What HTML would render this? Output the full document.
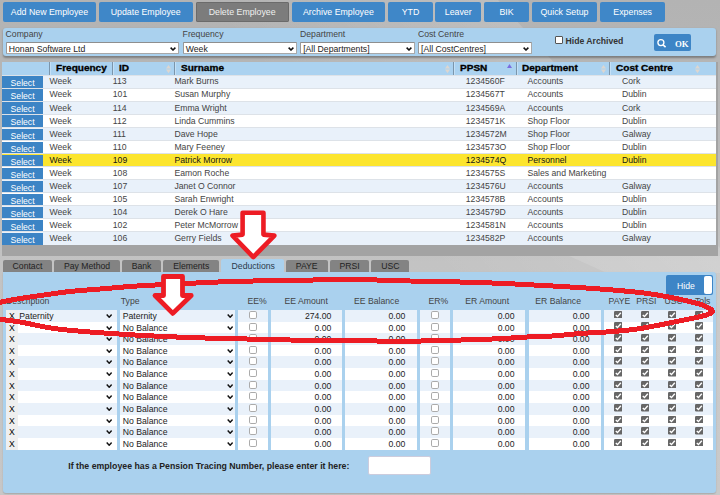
<!DOCTYPE html><html><head><meta charset="utf-8"><style>
*{margin:0;padding:0;box-sizing:border-box}
html,body{width:720px;height:495px;overflow:hidden}
body{position:relative;background:linear-gradient(to bottom,#b3b3b3 0px,#b5b5b5 60px,#bcbcbc 200px,#c3c3c3 262px,#c7c7c7 495px);font-family:"Liberation Sans",sans-serif;font-size:8.67px;color:#333}
.a{position:absolute}
.btn{position:absolute;top:2.2px;height:19.8px;background:#3f87c8;color:#fff;border-radius:2px;text-align:center;line-height:20px;font-size:8.8px;white-space:nowrap}
.panel{position:absolute;background:#aad1ee;border-radius:3px}
.lbl{position:absolute;font-size:8.67px;color:#444;white-space:nowrap}
.sel{position:absolute;height:12px;background:#fff;border:1px solid #a8a8a8;border-top-color:#8e8e8e;border-left-color:#999;border-radius:1px;font-size:8.67px;color:#222;line-height:12.2px;padding-left:2.2px;white-space:nowrap}
.chev{position:absolute;right:1.6px;top:3.6px;width:6px;height:3.6px}
.tbl{position:absolute;left:2.4px;top:62px;width:715.6px;height:194.2px;background:#a3a3a3}
.hdr{position:absolute;left:0;top:0;width:713.4px;height:12.7px;background:#abd2f0}
.hl{position:absolute;top:0;height:12.7px;font-weight:bold;color:#000;-webkit-text-stroke:0.3px #000;font-size:8.67px;line-height:12.9px;white-space:nowrap;transform-origin:0 50%;transform:scaleX(1.16)}
.hsep{position:absolute;top:0;width:1px;height:12.7px;background:#7b95ab;box-shadow:1px 0 0 #c4e0f6}
.row{position:absolute;left:0;width:713.4px;height:13.08px}
.row::before{content:'';position:absolute;left:0;top:-0.5px;width:100%;height:1px;background:#dde2e8}
.row span{position:absolute;top:0.4px;line-height:13px;white-space:nowrap;color:#444}
.yl span{color:#151515}
.sb{position:absolute;left:0;top:1.2px;width:40.4px;height:11.4px;background:#3c84c5;color:#fff;text-align:center;line-height:14.3px}
.tab{position:absolute;top:259.8px;height:12.2px;background:#838383;color:#222;text-align:center;line-height:12.5px;border-radius:2px 2px 0 0;font-size:8.67px}
</style></head><body>
<svg class="a" style="left:0;top:0" width="720" height="495" viewBox="0 0 720 495"><defs><linearGradient id="lb" gradientUnits="userSpaceOnUse" x1="520" y1="-20" x2="330" y2="150"><stop offset="0" stop-color="#fff" stop-opacity="0.16"/><stop offset="1" stop-color="#fff" stop-opacity="0"/></linearGradient></defs><polygon points="0,0 498,0 941,495 0,495" fill="url(#lb)"/><polygon points="569,256 720,256 720,273 607,273" fill="#fff" fill-opacity="0.12"/></svg>
<div class="btn" style="left:3px;width:93.0px">Add New Employee</div>
<div class="btn" style="left:98.7px;width:93.9px">Update Employee</div>
<div class="btn" style="left:195.5px;width:93.3px;background:#7c7c7c;box-shadow:inset 0 0 0 0.8px #666;color:#f0f0f0">Delete Employee</div>
<div class="btn" style="left:291.7px;width:93.3px">Archive Employee</div>
<div class="btn" style="left:388px;width:45.0px">YTD</div>
<div class="btn" style="left:435.4px;width:45.6px">Leaver</div>
<div class="btn" style="left:484px;width:45.0px">BIK</div>
<div class="btn" style="left:531.7px;width:65.6px">Quick Setup</div>
<div class="btn" style="left:600px;width:65.3px">Expenses</div>
<div class="panel" style="left:3px;top:28px;width:713px;height:27.6px;box-shadow:0 1.2px 2px rgba(0,0,0,.3)"></div>
<div class="lbl" style="left:5.6px;top:29.4px">Company</div>
<div class="sel" style="left:5.6px;top:42.4px;width:173.1px">Honan Software Ltd<svg class="chev" viewBox="0 0 6 3.6"><path d="M0.6 0.6 L3 3 L5.4 0.6" fill="none" stroke="#111" stroke-width="1.5"/></svg></div>
<div class="lbl" style="left:182.6px;top:29.4px">Frequency</div>
<div class="sel" style="left:182.6px;top:42.4px;width:114.4px">Week<svg class="chev" viewBox="0 0 6 3.6"><path d="M0.6 0.6 L3 3 L5.4 0.6" fill="none" stroke="#111" stroke-width="1.5"/></svg></div>
<div class="lbl" style="left:300px;top:29.4px">Department</div>
<div class="sel" style="left:300px;top:42.4px;width:114.8px">[All Departments]<svg class="chev" viewBox="0 0 6 3.6"><path d="M0.6 0.6 L3 3 L5.4 0.6" fill="none" stroke="#111" stroke-width="1.5"/></svg></div>
<div class="lbl" style="left:417.9px;top:29.4px">Cost Centre</div>
<div class="sel" style="left:417.9px;top:42.4px;width:114.1px">[All CostCentres]<svg class="chev" viewBox="0 0 6 3.6"><path d="M0.6 0.6 L3 3 L5.4 0.6" fill="none" stroke="#111" stroke-width="1.5"/></svg></div>
<div class="a" style="left:555px;top:36px;width:8px;height:8px;background:#fff;border:1px solid #555;border-radius:1px"></div>
<div class="lbl" style="left:565.5px;top:36px;font-weight:bold;color:#333">Hide Archived</div>
<div class="a" style="left:653.7px;top:34px;width:37.3px;height:17px;background:#3d85c6;border-radius:2px"></div>
<svg class="a" style="left:656px;top:38px" width="12" height="12" viewBox="0 0 12 12"><circle cx="4.9" cy="4.6" r="3" fill="none" stroke="#fff" stroke-width="1.35"/><path d="M7 6.8 L9.6 9.2" stroke="#fff" stroke-width="1.6"/></svg>
<div class="a" style="left:675px;top:39.2px;color:#fff;font-family:'Liberation Serif',serif;font-size:8.8px;font-weight:bold">OK</div>
<div class="tbl">
<div class="hdr">
<div class="hsep" style="left:46.6px"></div>
<div class="hsep" style="left:110px"></div>
<div class="hsep" style="left:172px"></div>
<div class="hsep" style="left:450.6px"></div>
<div class="hsep" style="left:513.2px"></div>
<div class="hsep" style="left:606.6px"></div>
<svg class="a" style="left:163.7px;top:2.9px" width="5" height="8.2" viewBox="0 0 5 8.2"><path d="M2.5 0 L5 3.6 L0 3.6Z M2.5 8.2 L5 4.6 L0 4.6Z" fill="#dcd6d0"/></svg>
<svg class="a" style="left:442.3px;top:2.9px" width="5" height="8.2" viewBox="0 0 5 8.2"><path d="M2.5 0 L5 3.6 L0 3.6Z M2.5 8.2 L5 4.6 L0 4.6Z" fill="#dcd6d0"/></svg>
<svg class="a" style="left:598.4px;top:2.9px" width="5" height="8.2" viewBox="0 0 5 8.2"><path d="M2.5 0 L5 3.6 L0 3.6Z M2.5 8.2 L5 4.6 L0 4.6Z" fill="#dcd6d0"/></svg>
<svg class="a" style="left:692.8px;top:2.9px" width="5" height="8.2" viewBox="0 0 5 8.2"><path d="M2.5 0 L5 3.6 L0 3.6Z M2.5 8.2 L5 4.6 L0 4.6Z" fill="#dcd6d0"/></svg>
<svg class="a" style="left:504.5px;top:2.4px" width="5" height="4" viewBox="0 0 5 4"><path d="M2.5 0 L5 4 L0 4Z" fill="#7a6ee0"/></svg>
<div class="hl" style="left:53.7px">Frequency</div>
<div class="hl" style="left:116.5px">ID</div>
<div class="hl" style="left:178.6px">Surname</div>
<div class="hl" style="left:457.2px">PPSN</div>
<div class="hl" style="left:519.6px">Department</div>
<div class="hl" style="left:613.4px">Cost Centre</div>
</div>
<div class="row" style="top:13.00px;background:#e9f1fa"><div class="sb">Select</div><span style="left:47.1px">Week</span><span style="left:110.4px">113</span><span style="left:172px">Mark Burns</span><span style="left:463.4px">1234560F</span><span style="left:525.1px">Accounts</span><span style="left:619.6px">Cork</span></div>
<div class="row" style="top:26.08px;background:#ffffff"><div class="sb">Select</div><span style="left:47.1px">Week</span><span style="left:110.4px">101</span><span style="left:172px">Susan Murphy</span><span style="left:463.4px">1234567T</span><span style="left:525.1px">Accounts</span><span style="left:619.6px">Dublin</span></div>
<div class="row" style="top:39.16px;background:#e9f1fa"><div class="sb">Select</div><span style="left:47.1px">Week</span><span style="left:110.4px">114</span><span style="left:172px">Emma Wright</span><span style="left:463.4px">1234569A</span><span style="left:525.1px">Accounts</span><span style="left:619.6px">Cork</span></div>
<div class="row" style="top:52.24px;background:#ffffff"><div class="sb">Select</div><span style="left:47.1px">Week</span><span style="left:110.4px">112</span><span style="left:172px">Linda Cummins</span><span style="left:463.4px">1234571K</span><span style="left:525.1px">Shop Floor</span><span style="left:619.6px">Dublin</span></div>
<div class="row" style="top:65.32px;background:#e9f1fa"><div class="sb">Select</div><span style="left:47.1px">Week</span><span style="left:110.4px">111</span><span style="left:172px">Dave Hope</span><span style="left:463.4px">1234572M</span><span style="left:525.1px">Shop Floor</span><span style="left:619.6px">Galway</span></div>
<div class="row" style="top:78.40px;background:#ffffff"><div class="sb">Select</div><span style="left:47.1px">Week</span><span style="left:110.4px">110</span><span style="left:172px">Mary Feeney</span><span style="left:463.4px">1234573O</span><span style="left:525.1px">Shop Floor</span><span style="left:619.6px">Dublin</span></div>
<div class="row yl" style="top:91.48px;background:#fce52e"><div class="sb">Select</div><span style="left:47.1px">Week</span><span style="left:110.4px">109</span><span style="left:172px">Patrick Morrow</span><span style="left:463.4px">1234574Q</span><span style="left:525.1px">Personnel</span><span style="left:619.6px">Dublin</span></div>
<div class="row" style="top:104.56px;background:#ffffff"><div class="sb">Select</div><span style="left:47.1px">Week</span><span style="left:110.4px">108</span><span style="left:172px">Eamon Roche</span><span style="left:463.4px">1234575S</span><span style="left:525.1px">Sales and Marketing</span><span style="left:619.6px"></span></div>
<div class="row" style="top:117.64px;background:#e9f1fa"><div class="sb">Select</div><span style="left:47.1px">Week</span><span style="left:110.4px">107</span><span style="left:172px">Janet O Connor</span><span style="left:463.4px">1234576U</span><span style="left:525.1px">Accounts</span><span style="left:619.6px">Galway</span></div>
<div class="row" style="top:130.72px;background:#ffffff"><div class="sb">Select</div><span style="left:47.1px">Week</span><span style="left:110.4px">105</span><span style="left:172px">Sarah Enwright</span><span style="left:463.4px">1234578B</span><span style="left:525.1px">Accounts</span><span style="left:619.6px">Dublin</span></div>
<div class="row" style="top:143.80px;background:#e9f1fa"><div class="sb">Select</div><span style="left:47.1px">Week</span><span style="left:110.4px">104</span><span style="left:172px">Derek O Hare</span><span style="left:463.4px">1234579D</span><span style="left:525.1px">Accounts</span><span style="left:619.6px">Dublin</span></div>
<div class="row" style="top:156.88px;background:#ffffff"><div class="sb">Select</div><span style="left:47.1px">Week</span><span style="left:110.4px">102</span><span style="left:172px">Peter McMorrow</span><span style="left:463.4px">1234581N</span><span style="left:525.1px">Accounts</span><span style="left:619.6px">Dublin</span></div>
<div class="row" style="top:169.96px;background:#e9f1fa"><div class="sb">Select</div><span style="left:47.1px">Week</span><span style="left:110.4px">106</span><span style="left:172px">Gerry Fields</span><span style="left:463.4px">1234582P</span><span style="left:525.1px">Accounts</span><span style="left:619.6px">Galway</span></div>
</div>
<div class="tab" style="left:3px;width:49.0px">Contact</div>
<div class="tab" style="left:54px;width:66.0px">Pay Method</div>
<div class="tab" style="left:122px;width:39.0px">Bank</div>
<div class="tab" style="left:163.3px;width:55.9px">Elements</div>
<div class="tab" style="left:221.1px;width:63.3px;background:#aad1ee;top:259.4px;height:13px;line-height:14.6px;padding-left:1px;color:#2a3a4a">Deductions</div>
<div class="tab" style="left:285.8px;width:41.9px">PAYE</div>
<div class="tab" style="left:330.2px;width:38.9px">PRSI</div>
<div class="tab" style="left:371.4px;width:38.0px">USC</div>
<div class="panel" style="left:2.7px;top:272.3px;width:713.3px;height:220.4px;border-radius:0 3px 3px 3px;box-shadow:0 1px 1.5px rgba(0,0,0,.16)"></div>
<div class="lbl" style="left:6px;top:296px;color:#444">Description</div>
<div class="lbl" style="left:120.8px;top:296px;color:#444">Type</div>
<div class="lbl" style="left:247.4px;top:296px;color:#444">EE%</div>
<div class="lbl" style="left:284.5px;top:296px;color:#444">EE Amount</div>
<div class="lbl" style="left:354px;top:296px;color:#444">EE Balance</div>
<div class="lbl" style="left:428.6px;top:296px;color:#444">ER%</div>
<div class="lbl" style="left:465.3px;top:296px;color:#444">ER Amount</div>
<div class="lbl" style="left:535.3px;top:296px;color:#444">ER Balance</div>
<div class="lbl" style="left:608.5px;top:296px;color:#444">PAYE</div>
<div class="lbl" style="left:636.3px;top:296px;color:#444">PRSI</div>
<div class="lbl" style="left:664.4px;top:296px;color:#444">USC</div>
<div class="lbl" style="left:695px;top:296px;color:#444">Tols</div>
<div class="a" style="left:666px;top:275px;width:46.5px;height:19.7px;background:#3d85c6;border-radius:2px"></div>
<div class="a" style="left:704px;top:276px;width:7.8px;height:18px;background:#fff;border-radius:2px"></div>
<div class="a" style="left:677px;top:280.5px;color:#fff;font-size:8.67px">Hide</div>
<div class="a" style="left:6px;top:309.90px;width:111.4px;height:11.7px;background:#e9f1fa"></div>
<div class="a" style="left:120.3px;top:309.90px;width:114.4px;height:11.7px;background:#e9f1fa"></div>
<div class="a" style="left:238.2px;top:309.90px;width:30.1px;height:11.7px;background:#e9f1fa"></div>
<div class="a" style="left:270.8px;top:309.90px;width:71.2px;height:11.7px;background:#e9f1fa"></div>
<div class="a" style="left:345px;top:309.90px;width:71.7px;height:11.7px;background:#e9f1fa"></div>
<div class="a" style="left:420px;top:309.90px;width:30.0px;height:11.7px;background:#e9f1fa"></div>
<div class="a" style="left:453.3px;top:309.90px;width:71.7px;height:11.7px;background:#e9f1fa"></div>
<div class="a" style="left:528.7px;top:309.90px;width:72.5px;height:11.7px;background:#e9f1fa"></div>
<div class="a" style="left:604.2px;top:309.90px;width:108.8px;height:11.7px;background:#e9f1fa"></div>
<div class="a" style="left:5.8px;top:309.90px;width:11.9px;height:11.7px;background:#efefef"></div>
<div class="a" style="left:9px;top:309.90px;line-height:13.3px;color:#000">X</div>
<div class="a" style="left:19.3px;top:309.90px;line-height:13.3px;color:#222">Paternity</div>
<div class="a" style="left:122.7px;top:309.90px;line-height:13.3px;color:#222">Paternity</div>
<div class="a" style="right:388.6px;top:309.90px;line-height:13.3px;color:#222">274.00</div>
<svg class="a" style="left:106px;top:313.90px" width="6.4" height="4" viewBox="0 0 6.4 4"><path d="M0.7 0.6 L3.2 3.2 L5.7 0.6" fill="none" stroke="#111" stroke-width="1.5"/></svg>
<svg class="a" style="left:227px;top:313.90px" width="6.4" height="4" viewBox="0 0 6.4 4"><path d="M0.7 0.6 L3.2 3.2 L5.7 0.6" fill="none" stroke="#111" stroke-width="1.5"/></svg>
<div class="a" style="right:314.7px;top:309.90px;line-height:13.3px;color:#222">0.00</div>
<div class="a" style="right:205.5px;top:309.90px;line-height:13.3px;color:#222">0.00</div>
<div class="a" style="right:130.5px;top:309.90px;line-height:13.3px;color:#222">0.00</div>
<div class="a" style="left:249.20px;top:310.90px;width:8px;height:8px;background:#fff;border:1px solid #ababab;border-radius:1.8px"></div>
<div class="a" style="left:430.80px;top:310.90px;width:8px;height:8px;background:#fff;border:1px solid #ababab;border-radius:1.8px"></div>
<svg class="a" style="left:613.50px;top:310.80px" width="8.4" height="7.6" viewBox="0 0 8.4 7.6"><rect x="0" y="0" width="8.4" height="7.6" rx="1.3" fill="#666"/><path d="M1.8 3.9 L3.5 5.6 L6.8 1.8" fill="none" stroke="#fff" stroke-width="1.4"/></svg>
<svg class="a" style="left:640.70px;top:310.80px" width="8.4" height="7.6" viewBox="0 0 8.4 7.6"><rect x="0" y="0" width="8.4" height="7.6" rx="1.3" fill="#666"/><path d="M1.8 3.9 L3.5 5.6 L6.8 1.8" fill="none" stroke="#fff" stroke-width="1.4"/></svg>
<svg class="a" style="left:667.60px;top:310.80px" width="8.4" height="7.6" viewBox="0 0 8.4 7.6"><rect x="0" y="0" width="8.4" height="7.6" rx="1.3" fill="#666"/><path d="M1.8 3.9 L3.5 5.6 L6.8 1.8" fill="none" stroke="#fff" stroke-width="1.4"/></svg>
<svg class="a" style="left:694.70px;top:310.80px" width="8.4" height="7.6" viewBox="0 0 8.4 7.6"><rect x="0" y="0" width="8.4" height="7.6" rx="1.3" fill="#666"/><path d="M1.8 3.9 L3.5 5.6 L6.8 1.8" fill="none" stroke="#fff" stroke-width="1.4"/></svg>
<div class="a" style="left:6px;top:321.54px;width:111.4px;height:11.7px;background:#ffffff"></div>
<div class="a" style="left:120.3px;top:321.54px;width:114.4px;height:11.7px;background:#ffffff"></div>
<div class="a" style="left:238.2px;top:321.54px;width:30.1px;height:11.7px;background:#ffffff"></div>
<div class="a" style="left:270.8px;top:321.54px;width:71.2px;height:11.7px;background:#ffffff"></div>
<div class="a" style="left:345px;top:321.54px;width:71.7px;height:11.7px;background:#ffffff"></div>
<div class="a" style="left:420px;top:321.54px;width:30.0px;height:11.7px;background:#ffffff"></div>
<div class="a" style="left:453.3px;top:321.54px;width:71.7px;height:11.7px;background:#ffffff"></div>
<div class="a" style="left:528.7px;top:321.54px;width:72.5px;height:11.7px;background:#ffffff"></div>
<div class="a" style="left:604.2px;top:321.54px;width:108.8px;height:11.7px;background:#ffffff"></div>
<div class="a" style="left:5.8px;top:321.54px;width:11.9px;height:11.7px;background:#efefef"></div>
<div class="a" style="left:9px;top:321.54px;line-height:13.3px;color:#000">X</div>
<div class="a" style="left:122.7px;top:321.54px;line-height:13.3px;color:#222">No Balance</div>
<div class="a" style="right:388.6px;top:321.54px;line-height:13.3px;color:#222">0.00</div>
<svg class="a" style="left:106px;top:325.54px" width="6.4" height="4" viewBox="0 0 6.4 4"><path d="M0.7 0.6 L3.2 3.2 L5.7 0.6" fill="none" stroke="#111" stroke-width="1.5"/></svg>
<svg class="a" style="left:227px;top:325.54px" width="6.4" height="4" viewBox="0 0 6.4 4"><path d="M0.7 0.6 L3.2 3.2 L5.7 0.6" fill="none" stroke="#111" stroke-width="1.5"/></svg>
<div class="a" style="right:314.7px;top:321.54px;line-height:13.3px;color:#222">0.00</div>
<div class="a" style="right:205.5px;top:321.54px;line-height:13.3px;color:#222">0.00</div>
<div class="a" style="right:130.5px;top:321.54px;line-height:13.3px;color:#222">0.00</div>
<div class="a" style="left:249.20px;top:322.54px;width:8px;height:8px;background:#fff;border:1px solid #ababab;border-radius:1.8px"></div>
<div class="a" style="left:430.80px;top:322.54px;width:8px;height:8px;background:#fff;border:1px solid #ababab;border-radius:1.8px"></div>
<svg class="a" style="left:613.50px;top:322.44px" width="8.4" height="7.6" viewBox="0 0 8.4 7.6"><rect x="0" y="0" width="8.4" height="7.6" rx="1.3" fill="#666"/><path d="M1.8 3.9 L3.5 5.6 L6.8 1.8" fill="none" stroke="#fff" stroke-width="1.4"/></svg>
<svg class="a" style="left:640.70px;top:322.44px" width="8.4" height="7.6" viewBox="0 0 8.4 7.6"><rect x="0" y="0" width="8.4" height="7.6" rx="1.3" fill="#666"/><path d="M1.8 3.9 L3.5 5.6 L6.8 1.8" fill="none" stroke="#fff" stroke-width="1.4"/></svg>
<svg class="a" style="left:667.60px;top:322.44px" width="8.4" height="7.6" viewBox="0 0 8.4 7.6"><rect x="0" y="0" width="8.4" height="7.6" rx="1.3" fill="#666"/><path d="M1.8 3.9 L3.5 5.6 L6.8 1.8" fill="none" stroke="#fff" stroke-width="1.4"/></svg>
<svg class="a" style="left:694.70px;top:322.44px" width="8.4" height="7.6" viewBox="0 0 8.4 7.6"><rect x="0" y="0" width="8.4" height="7.6" rx="1.3" fill="#666"/><path d="M1.8 3.9 L3.5 5.6 L6.8 1.8" fill="none" stroke="#fff" stroke-width="1.4"/></svg>
<div class="a" style="left:6px;top:333.18px;width:111.4px;height:11.7px;background:#e9f1fa"></div>
<div class="a" style="left:120.3px;top:333.18px;width:114.4px;height:11.7px;background:#e9f1fa"></div>
<div class="a" style="left:238.2px;top:333.18px;width:30.1px;height:11.7px;background:#e9f1fa"></div>
<div class="a" style="left:270.8px;top:333.18px;width:71.2px;height:11.7px;background:#e9f1fa"></div>
<div class="a" style="left:345px;top:333.18px;width:71.7px;height:11.7px;background:#e9f1fa"></div>
<div class="a" style="left:420px;top:333.18px;width:30.0px;height:11.7px;background:#e9f1fa"></div>
<div class="a" style="left:453.3px;top:333.18px;width:71.7px;height:11.7px;background:#e9f1fa"></div>
<div class="a" style="left:528.7px;top:333.18px;width:72.5px;height:11.7px;background:#e9f1fa"></div>
<div class="a" style="left:604.2px;top:333.18px;width:108.8px;height:11.7px;background:#e9f1fa"></div>
<div class="a" style="left:5.8px;top:333.18px;width:11.9px;height:11.7px;background:#efefef"></div>
<div class="a" style="left:9px;top:333.18px;line-height:13.3px;color:#000">X</div>
<div class="a" style="left:122.7px;top:333.18px;line-height:13.3px;color:#222">No Balance</div>
<div class="a" style="right:388.6px;top:333.18px;line-height:13.3px;color:#222">0.00</div>
<svg class="a" style="left:106px;top:337.18px" width="6.4" height="4" viewBox="0 0 6.4 4"><path d="M0.7 0.6 L3.2 3.2 L5.7 0.6" fill="none" stroke="#111" stroke-width="1.5"/></svg>
<svg class="a" style="left:227px;top:337.18px" width="6.4" height="4" viewBox="0 0 6.4 4"><path d="M0.7 0.6 L3.2 3.2 L5.7 0.6" fill="none" stroke="#111" stroke-width="1.5"/></svg>
<div class="a" style="right:314.7px;top:333.18px;line-height:13.3px;color:#222">0.00</div>
<div class="a" style="right:205.5px;top:333.18px;line-height:13.3px;color:#222">0.00</div>
<div class="a" style="right:130.5px;top:333.18px;line-height:13.3px;color:#222">0.00</div>
<div class="a" style="left:249.20px;top:334.18px;width:8px;height:8px;background:#fff;border:1px solid #ababab;border-radius:1.8px"></div>
<div class="a" style="left:430.80px;top:334.18px;width:8px;height:8px;background:#fff;border:1px solid #ababab;border-radius:1.8px"></div>
<svg class="a" style="left:613.50px;top:334.08px" width="8.4" height="7.6" viewBox="0 0 8.4 7.6"><rect x="0" y="0" width="8.4" height="7.6" rx="1.3" fill="#666"/><path d="M1.8 3.9 L3.5 5.6 L6.8 1.8" fill="none" stroke="#fff" stroke-width="1.4"/></svg>
<svg class="a" style="left:640.70px;top:334.08px" width="8.4" height="7.6" viewBox="0 0 8.4 7.6"><rect x="0" y="0" width="8.4" height="7.6" rx="1.3" fill="#666"/><path d="M1.8 3.9 L3.5 5.6 L6.8 1.8" fill="none" stroke="#fff" stroke-width="1.4"/></svg>
<svg class="a" style="left:667.60px;top:334.08px" width="8.4" height="7.6" viewBox="0 0 8.4 7.6"><rect x="0" y="0" width="8.4" height="7.6" rx="1.3" fill="#666"/><path d="M1.8 3.9 L3.5 5.6 L6.8 1.8" fill="none" stroke="#fff" stroke-width="1.4"/></svg>
<svg class="a" style="left:694.70px;top:334.08px" width="8.4" height="7.6" viewBox="0 0 8.4 7.6"><rect x="0" y="0" width="8.4" height="7.6" rx="1.3" fill="#666"/><path d="M1.8 3.9 L3.5 5.6 L6.8 1.8" fill="none" stroke="#fff" stroke-width="1.4"/></svg>
<div class="a" style="left:6px;top:344.82px;width:111.4px;height:11.7px;background:#ffffff"></div>
<div class="a" style="left:120.3px;top:344.82px;width:114.4px;height:11.7px;background:#ffffff"></div>
<div class="a" style="left:238.2px;top:344.82px;width:30.1px;height:11.7px;background:#ffffff"></div>
<div class="a" style="left:270.8px;top:344.82px;width:71.2px;height:11.7px;background:#ffffff"></div>
<div class="a" style="left:345px;top:344.82px;width:71.7px;height:11.7px;background:#ffffff"></div>
<div class="a" style="left:420px;top:344.82px;width:30.0px;height:11.7px;background:#ffffff"></div>
<div class="a" style="left:453.3px;top:344.82px;width:71.7px;height:11.7px;background:#ffffff"></div>
<div class="a" style="left:528.7px;top:344.82px;width:72.5px;height:11.7px;background:#ffffff"></div>
<div class="a" style="left:604.2px;top:344.82px;width:108.8px;height:11.7px;background:#ffffff"></div>
<div class="a" style="left:5.8px;top:344.82px;width:11.9px;height:11.7px;background:#efefef"></div>
<div class="a" style="left:9px;top:344.82px;line-height:13.3px;color:#000">X</div>
<div class="a" style="left:122.7px;top:344.82px;line-height:13.3px;color:#222">No Balance</div>
<div class="a" style="right:388.6px;top:344.82px;line-height:13.3px;color:#222">0.00</div>
<svg class="a" style="left:106px;top:348.82px" width="6.4" height="4" viewBox="0 0 6.4 4"><path d="M0.7 0.6 L3.2 3.2 L5.7 0.6" fill="none" stroke="#111" stroke-width="1.5"/></svg>
<svg class="a" style="left:227px;top:348.82px" width="6.4" height="4" viewBox="0 0 6.4 4"><path d="M0.7 0.6 L3.2 3.2 L5.7 0.6" fill="none" stroke="#111" stroke-width="1.5"/></svg>
<div class="a" style="right:314.7px;top:344.82px;line-height:13.3px;color:#222">0.00</div>
<div class="a" style="right:205.5px;top:344.82px;line-height:13.3px;color:#222">0.00</div>
<div class="a" style="right:130.5px;top:344.82px;line-height:13.3px;color:#222">0.00</div>
<div class="a" style="left:249.20px;top:345.82px;width:8px;height:8px;background:#fff;border:1px solid #ababab;border-radius:1.8px"></div>
<div class="a" style="left:430.80px;top:345.82px;width:8px;height:8px;background:#fff;border:1px solid #ababab;border-radius:1.8px"></div>
<svg class="a" style="left:613.50px;top:345.72px" width="8.4" height="7.6" viewBox="0 0 8.4 7.6"><rect x="0" y="0" width="8.4" height="7.6" rx="1.3" fill="#666"/><path d="M1.8 3.9 L3.5 5.6 L6.8 1.8" fill="none" stroke="#fff" stroke-width="1.4"/></svg>
<svg class="a" style="left:640.70px;top:345.72px" width="8.4" height="7.6" viewBox="0 0 8.4 7.6"><rect x="0" y="0" width="8.4" height="7.6" rx="1.3" fill="#666"/><path d="M1.8 3.9 L3.5 5.6 L6.8 1.8" fill="none" stroke="#fff" stroke-width="1.4"/></svg>
<svg class="a" style="left:667.60px;top:345.72px" width="8.4" height="7.6" viewBox="0 0 8.4 7.6"><rect x="0" y="0" width="8.4" height="7.6" rx="1.3" fill="#666"/><path d="M1.8 3.9 L3.5 5.6 L6.8 1.8" fill="none" stroke="#fff" stroke-width="1.4"/></svg>
<svg class="a" style="left:694.70px;top:345.72px" width="8.4" height="7.6" viewBox="0 0 8.4 7.6"><rect x="0" y="0" width="8.4" height="7.6" rx="1.3" fill="#666"/><path d="M1.8 3.9 L3.5 5.6 L6.8 1.8" fill="none" stroke="#fff" stroke-width="1.4"/></svg>
<div class="a" style="left:6px;top:356.46px;width:111.4px;height:11.7px;background:#e9f1fa"></div>
<div class="a" style="left:120.3px;top:356.46px;width:114.4px;height:11.7px;background:#e9f1fa"></div>
<div class="a" style="left:238.2px;top:356.46px;width:30.1px;height:11.7px;background:#e9f1fa"></div>
<div class="a" style="left:270.8px;top:356.46px;width:71.2px;height:11.7px;background:#e9f1fa"></div>
<div class="a" style="left:345px;top:356.46px;width:71.7px;height:11.7px;background:#e9f1fa"></div>
<div class="a" style="left:420px;top:356.46px;width:30.0px;height:11.7px;background:#e9f1fa"></div>
<div class="a" style="left:453.3px;top:356.46px;width:71.7px;height:11.7px;background:#e9f1fa"></div>
<div class="a" style="left:528.7px;top:356.46px;width:72.5px;height:11.7px;background:#e9f1fa"></div>
<div class="a" style="left:604.2px;top:356.46px;width:108.8px;height:11.7px;background:#e9f1fa"></div>
<div class="a" style="left:5.8px;top:356.46px;width:11.9px;height:11.7px;background:#efefef"></div>
<div class="a" style="left:9px;top:356.46px;line-height:13.3px;color:#000">X</div>
<div class="a" style="left:122.7px;top:356.46px;line-height:13.3px;color:#222">No Balance</div>
<div class="a" style="right:388.6px;top:356.46px;line-height:13.3px;color:#222">0.00</div>
<svg class="a" style="left:106px;top:360.46px" width="6.4" height="4" viewBox="0 0 6.4 4"><path d="M0.7 0.6 L3.2 3.2 L5.7 0.6" fill="none" stroke="#111" stroke-width="1.5"/></svg>
<svg class="a" style="left:227px;top:360.46px" width="6.4" height="4" viewBox="0 0 6.4 4"><path d="M0.7 0.6 L3.2 3.2 L5.7 0.6" fill="none" stroke="#111" stroke-width="1.5"/></svg>
<div class="a" style="right:314.7px;top:356.46px;line-height:13.3px;color:#222">0.00</div>
<div class="a" style="right:205.5px;top:356.46px;line-height:13.3px;color:#222">0.00</div>
<div class="a" style="right:130.5px;top:356.46px;line-height:13.3px;color:#222">0.00</div>
<div class="a" style="left:249.20px;top:357.46px;width:8px;height:8px;background:#fff;border:1px solid #ababab;border-radius:1.8px"></div>
<div class="a" style="left:430.80px;top:357.46px;width:8px;height:8px;background:#fff;border:1px solid #ababab;border-radius:1.8px"></div>
<svg class="a" style="left:613.50px;top:357.36px" width="8.4" height="7.6" viewBox="0 0 8.4 7.6"><rect x="0" y="0" width="8.4" height="7.6" rx="1.3" fill="#666"/><path d="M1.8 3.9 L3.5 5.6 L6.8 1.8" fill="none" stroke="#fff" stroke-width="1.4"/></svg>
<svg class="a" style="left:640.70px;top:357.36px" width="8.4" height="7.6" viewBox="0 0 8.4 7.6"><rect x="0" y="0" width="8.4" height="7.6" rx="1.3" fill="#666"/><path d="M1.8 3.9 L3.5 5.6 L6.8 1.8" fill="none" stroke="#fff" stroke-width="1.4"/></svg>
<svg class="a" style="left:667.60px;top:357.36px" width="8.4" height="7.6" viewBox="0 0 8.4 7.6"><rect x="0" y="0" width="8.4" height="7.6" rx="1.3" fill="#666"/><path d="M1.8 3.9 L3.5 5.6 L6.8 1.8" fill="none" stroke="#fff" stroke-width="1.4"/></svg>
<svg class="a" style="left:694.70px;top:357.36px" width="8.4" height="7.6" viewBox="0 0 8.4 7.6"><rect x="0" y="0" width="8.4" height="7.6" rx="1.3" fill="#666"/><path d="M1.8 3.9 L3.5 5.6 L6.8 1.8" fill="none" stroke="#fff" stroke-width="1.4"/></svg>
<div class="a" style="left:6px;top:368.10px;width:111.4px;height:11.7px;background:#ffffff"></div>
<div class="a" style="left:120.3px;top:368.10px;width:114.4px;height:11.7px;background:#ffffff"></div>
<div class="a" style="left:238.2px;top:368.10px;width:30.1px;height:11.7px;background:#ffffff"></div>
<div class="a" style="left:270.8px;top:368.10px;width:71.2px;height:11.7px;background:#ffffff"></div>
<div class="a" style="left:345px;top:368.10px;width:71.7px;height:11.7px;background:#ffffff"></div>
<div class="a" style="left:420px;top:368.10px;width:30.0px;height:11.7px;background:#ffffff"></div>
<div class="a" style="left:453.3px;top:368.10px;width:71.7px;height:11.7px;background:#ffffff"></div>
<div class="a" style="left:528.7px;top:368.10px;width:72.5px;height:11.7px;background:#ffffff"></div>
<div class="a" style="left:604.2px;top:368.10px;width:108.8px;height:11.7px;background:#ffffff"></div>
<div class="a" style="left:5.8px;top:368.10px;width:11.9px;height:11.7px;background:#efefef"></div>
<div class="a" style="left:9px;top:368.10px;line-height:13.3px;color:#000">X</div>
<div class="a" style="left:122.7px;top:368.10px;line-height:13.3px;color:#222">No Balance</div>
<div class="a" style="right:388.6px;top:368.10px;line-height:13.3px;color:#222">0.00</div>
<svg class="a" style="left:106px;top:372.10px" width="6.4" height="4" viewBox="0 0 6.4 4"><path d="M0.7 0.6 L3.2 3.2 L5.7 0.6" fill="none" stroke="#111" stroke-width="1.5"/></svg>
<svg class="a" style="left:227px;top:372.10px" width="6.4" height="4" viewBox="0 0 6.4 4"><path d="M0.7 0.6 L3.2 3.2 L5.7 0.6" fill="none" stroke="#111" stroke-width="1.5"/></svg>
<div class="a" style="right:314.7px;top:368.10px;line-height:13.3px;color:#222">0.00</div>
<div class="a" style="right:205.5px;top:368.10px;line-height:13.3px;color:#222">0.00</div>
<div class="a" style="right:130.5px;top:368.10px;line-height:13.3px;color:#222">0.00</div>
<div class="a" style="left:249.20px;top:369.10px;width:8px;height:8px;background:#fff;border:1px solid #ababab;border-radius:1.8px"></div>
<div class="a" style="left:430.80px;top:369.10px;width:8px;height:8px;background:#fff;border:1px solid #ababab;border-radius:1.8px"></div>
<svg class="a" style="left:613.50px;top:369.00px" width="8.4" height="7.6" viewBox="0 0 8.4 7.6"><rect x="0" y="0" width="8.4" height="7.6" rx="1.3" fill="#666"/><path d="M1.8 3.9 L3.5 5.6 L6.8 1.8" fill="none" stroke="#fff" stroke-width="1.4"/></svg>
<svg class="a" style="left:640.70px;top:369.00px" width="8.4" height="7.6" viewBox="0 0 8.4 7.6"><rect x="0" y="0" width="8.4" height="7.6" rx="1.3" fill="#666"/><path d="M1.8 3.9 L3.5 5.6 L6.8 1.8" fill="none" stroke="#fff" stroke-width="1.4"/></svg>
<svg class="a" style="left:667.60px;top:369.00px" width="8.4" height="7.6" viewBox="0 0 8.4 7.6"><rect x="0" y="0" width="8.4" height="7.6" rx="1.3" fill="#666"/><path d="M1.8 3.9 L3.5 5.6 L6.8 1.8" fill="none" stroke="#fff" stroke-width="1.4"/></svg>
<svg class="a" style="left:694.70px;top:369.00px" width="8.4" height="7.6" viewBox="0 0 8.4 7.6"><rect x="0" y="0" width="8.4" height="7.6" rx="1.3" fill="#666"/><path d="M1.8 3.9 L3.5 5.6 L6.8 1.8" fill="none" stroke="#fff" stroke-width="1.4"/></svg>
<div class="a" style="left:6px;top:379.74px;width:111.4px;height:11.7px;background:#e9f1fa"></div>
<div class="a" style="left:120.3px;top:379.74px;width:114.4px;height:11.7px;background:#e9f1fa"></div>
<div class="a" style="left:238.2px;top:379.74px;width:30.1px;height:11.7px;background:#e9f1fa"></div>
<div class="a" style="left:270.8px;top:379.74px;width:71.2px;height:11.7px;background:#e9f1fa"></div>
<div class="a" style="left:345px;top:379.74px;width:71.7px;height:11.7px;background:#e9f1fa"></div>
<div class="a" style="left:420px;top:379.74px;width:30.0px;height:11.7px;background:#e9f1fa"></div>
<div class="a" style="left:453.3px;top:379.74px;width:71.7px;height:11.7px;background:#e9f1fa"></div>
<div class="a" style="left:528.7px;top:379.74px;width:72.5px;height:11.7px;background:#e9f1fa"></div>
<div class="a" style="left:604.2px;top:379.74px;width:108.8px;height:11.7px;background:#e9f1fa"></div>
<div class="a" style="left:5.8px;top:379.74px;width:11.9px;height:11.7px;background:#efefef"></div>
<div class="a" style="left:9px;top:379.74px;line-height:13.3px;color:#000">X</div>
<div class="a" style="left:122.7px;top:379.74px;line-height:13.3px;color:#222">No Balance</div>
<div class="a" style="right:388.6px;top:379.74px;line-height:13.3px;color:#222">0.00</div>
<svg class="a" style="left:106px;top:383.74px" width="6.4" height="4" viewBox="0 0 6.4 4"><path d="M0.7 0.6 L3.2 3.2 L5.7 0.6" fill="none" stroke="#111" stroke-width="1.5"/></svg>
<svg class="a" style="left:227px;top:383.74px" width="6.4" height="4" viewBox="0 0 6.4 4"><path d="M0.7 0.6 L3.2 3.2 L5.7 0.6" fill="none" stroke="#111" stroke-width="1.5"/></svg>
<div class="a" style="right:314.7px;top:379.74px;line-height:13.3px;color:#222">0.00</div>
<div class="a" style="right:205.5px;top:379.74px;line-height:13.3px;color:#222">0.00</div>
<div class="a" style="right:130.5px;top:379.74px;line-height:13.3px;color:#222">0.00</div>
<div class="a" style="left:249.20px;top:380.74px;width:8px;height:8px;background:#fff;border:1px solid #ababab;border-radius:1.8px"></div>
<div class="a" style="left:430.80px;top:380.74px;width:8px;height:8px;background:#fff;border:1px solid #ababab;border-radius:1.8px"></div>
<svg class="a" style="left:613.50px;top:380.64px" width="8.4" height="7.6" viewBox="0 0 8.4 7.6"><rect x="0" y="0" width="8.4" height="7.6" rx="1.3" fill="#666"/><path d="M1.8 3.9 L3.5 5.6 L6.8 1.8" fill="none" stroke="#fff" stroke-width="1.4"/></svg>
<svg class="a" style="left:640.70px;top:380.64px" width="8.4" height="7.6" viewBox="0 0 8.4 7.6"><rect x="0" y="0" width="8.4" height="7.6" rx="1.3" fill="#666"/><path d="M1.8 3.9 L3.5 5.6 L6.8 1.8" fill="none" stroke="#fff" stroke-width="1.4"/></svg>
<svg class="a" style="left:667.60px;top:380.64px" width="8.4" height="7.6" viewBox="0 0 8.4 7.6"><rect x="0" y="0" width="8.4" height="7.6" rx="1.3" fill="#666"/><path d="M1.8 3.9 L3.5 5.6 L6.8 1.8" fill="none" stroke="#fff" stroke-width="1.4"/></svg>
<svg class="a" style="left:694.70px;top:380.64px" width="8.4" height="7.6" viewBox="0 0 8.4 7.6"><rect x="0" y="0" width="8.4" height="7.6" rx="1.3" fill="#666"/><path d="M1.8 3.9 L3.5 5.6 L6.8 1.8" fill="none" stroke="#fff" stroke-width="1.4"/></svg>
<div class="a" style="left:6px;top:391.38px;width:111.4px;height:11.7px;background:#ffffff"></div>
<div class="a" style="left:120.3px;top:391.38px;width:114.4px;height:11.7px;background:#ffffff"></div>
<div class="a" style="left:238.2px;top:391.38px;width:30.1px;height:11.7px;background:#ffffff"></div>
<div class="a" style="left:270.8px;top:391.38px;width:71.2px;height:11.7px;background:#ffffff"></div>
<div class="a" style="left:345px;top:391.38px;width:71.7px;height:11.7px;background:#ffffff"></div>
<div class="a" style="left:420px;top:391.38px;width:30.0px;height:11.7px;background:#ffffff"></div>
<div class="a" style="left:453.3px;top:391.38px;width:71.7px;height:11.7px;background:#ffffff"></div>
<div class="a" style="left:528.7px;top:391.38px;width:72.5px;height:11.7px;background:#ffffff"></div>
<div class="a" style="left:604.2px;top:391.38px;width:108.8px;height:11.7px;background:#ffffff"></div>
<div class="a" style="left:5.8px;top:391.38px;width:11.9px;height:11.7px;background:#efefef"></div>
<div class="a" style="left:9px;top:391.38px;line-height:13.3px;color:#000">X</div>
<div class="a" style="left:122.7px;top:391.38px;line-height:13.3px;color:#222">No Balance</div>
<div class="a" style="right:388.6px;top:391.38px;line-height:13.3px;color:#222">0.00</div>
<svg class="a" style="left:106px;top:395.38px" width="6.4" height="4" viewBox="0 0 6.4 4"><path d="M0.7 0.6 L3.2 3.2 L5.7 0.6" fill="none" stroke="#111" stroke-width="1.5"/></svg>
<svg class="a" style="left:227px;top:395.38px" width="6.4" height="4" viewBox="0 0 6.4 4"><path d="M0.7 0.6 L3.2 3.2 L5.7 0.6" fill="none" stroke="#111" stroke-width="1.5"/></svg>
<div class="a" style="right:314.7px;top:391.38px;line-height:13.3px;color:#222">0.00</div>
<div class="a" style="right:205.5px;top:391.38px;line-height:13.3px;color:#222">0.00</div>
<div class="a" style="right:130.5px;top:391.38px;line-height:13.3px;color:#222">0.00</div>
<div class="a" style="left:249.20px;top:392.38px;width:8px;height:8px;background:#fff;border:1px solid #ababab;border-radius:1.8px"></div>
<div class="a" style="left:430.80px;top:392.38px;width:8px;height:8px;background:#fff;border:1px solid #ababab;border-radius:1.8px"></div>
<svg class="a" style="left:613.50px;top:392.28px" width="8.4" height="7.6" viewBox="0 0 8.4 7.6"><rect x="0" y="0" width="8.4" height="7.6" rx="1.3" fill="#666"/><path d="M1.8 3.9 L3.5 5.6 L6.8 1.8" fill="none" stroke="#fff" stroke-width="1.4"/></svg>
<svg class="a" style="left:640.70px;top:392.28px" width="8.4" height="7.6" viewBox="0 0 8.4 7.6"><rect x="0" y="0" width="8.4" height="7.6" rx="1.3" fill="#666"/><path d="M1.8 3.9 L3.5 5.6 L6.8 1.8" fill="none" stroke="#fff" stroke-width="1.4"/></svg>
<svg class="a" style="left:667.60px;top:392.28px" width="8.4" height="7.6" viewBox="0 0 8.4 7.6"><rect x="0" y="0" width="8.4" height="7.6" rx="1.3" fill="#666"/><path d="M1.8 3.9 L3.5 5.6 L6.8 1.8" fill="none" stroke="#fff" stroke-width="1.4"/></svg>
<svg class="a" style="left:694.70px;top:392.28px" width="8.4" height="7.6" viewBox="0 0 8.4 7.6"><rect x="0" y="0" width="8.4" height="7.6" rx="1.3" fill="#666"/><path d="M1.8 3.9 L3.5 5.6 L6.8 1.8" fill="none" stroke="#fff" stroke-width="1.4"/></svg>
<div class="a" style="left:6px;top:403.02px;width:111.4px;height:11.7px;background:#e9f1fa"></div>
<div class="a" style="left:120.3px;top:403.02px;width:114.4px;height:11.7px;background:#e9f1fa"></div>
<div class="a" style="left:238.2px;top:403.02px;width:30.1px;height:11.7px;background:#e9f1fa"></div>
<div class="a" style="left:270.8px;top:403.02px;width:71.2px;height:11.7px;background:#e9f1fa"></div>
<div class="a" style="left:345px;top:403.02px;width:71.7px;height:11.7px;background:#e9f1fa"></div>
<div class="a" style="left:420px;top:403.02px;width:30.0px;height:11.7px;background:#e9f1fa"></div>
<div class="a" style="left:453.3px;top:403.02px;width:71.7px;height:11.7px;background:#e9f1fa"></div>
<div class="a" style="left:528.7px;top:403.02px;width:72.5px;height:11.7px;background:#e9f1fa"></div>
<div class="a" style="left:604.2px;top:403.02px;width:108.8px;height:11.7px;background:#e9f1fa"></div>
<div class="a" style="left:5.8px;top:403.02px;width:11.9px;height:11.7px;background:#efefef"></div>
<div class="a" style="left:9px;top:403.02px;line-height:13.3px;color:#000">X</div>
<div class="a" style="left:122.7px;top:403.02px;line-height:13.3px;color:#222">No Balance</div>
<div class="a" style="right:388.6px;top:403.02px;line-height:13.3px;color:#222">0.00</div>
<svg class="a" style="left:106px;top:407.02px" width="6.4" height="4" viewBox="0 0 6.4 4"><path d="M0.7 0.6 L3.2 3.2 L5.7 0.6" fill="none" stroke="#111" stroke-width="1.5"/></svg>
<svg class="a" style="left:227px;top:407.02px" width="6.4" height="4" viewBox="0 0 6.4 4"><path d="M0.7 0.6 L3.2 3.2 L5.7 0.6" fill="none" stroke="#111" stroke-width="1.5"/></svg>
<div class="a" style="right:314.7px;top:403.02px;line-height:13.3px;color:#222">0.00</div>
<div class="a" style="right:205.5px;top:403.02px;line-height:13.3px;color:#222">0.00</div>
<div class="a" style="right:130.5px;top:403.02px;line-height:13.3px;color:#222">0.00</div>
<div class="a" style="left:249.20px;top:404.02px;width:8px;height:8px;background:#fff;border:1px solid #ababab;border-radius:1.8px"></div>
<div class="a" style="left:430.80px;top:404.02px;width:8px;height:8px;background:#fff;border:1px solid #ababab;border-radius:1.8px"></div>
<svg class="a" style="left:613.50px;top:403.92px" width="8.4" height="7.6" viewBox="0 0 8.4 7.6"><rect x="0" y="0" width="8.4" height="7.6" rx="1.3" fill="#666"/><path d="M1.8 3.9 L3.5 5.6 L6.8 1.8" fill="none" stroke="#fff" stroke-width="1.4"/></svg>
<svg class="a" style="left:640.70px;top:403.92px" width="8.4" height="7.6" viewBox="0 0 8.4 7.6"><rect x="0" y="0" width="8.4" height="7.6" rx="1.3" fill="#666"/><path d="M1.8 3.9 L3.5 5.6 L6.8 1.8" fill="none" stroke="#fff" stroke-width="1.4"/></svg>
<svg class="a" style="left:667.60px;top:403.92px" width="8.4" height="7.6" viewBox="0 0 8.4 7.6"><rect x="0" y="0" width="8.4" height="7.6" rx="1.3" fill="#666"/><path d="M1.8 3.9 L3.5 5.6 L6.8 1.8" fill="none" stroke="#fff" stroke-width="1.4"/></svg>
<svg class="a" style="left:694.70px;top:403.92px" width="8.4" height="7.6" viewBox="0 0 8.4 7.6"><rect x="0" y="0" width="8.4" height="7.6" rx="1.3" fill="#666"/><path d="M1.8 3.9 L3.5 5.6 L6.8 1.8" fill="none" stroke="#fff" stroke-width="1.4"/></svg>
<div class="a" style="left:6px;top:414.66px;width:111.4px;height:11.7px;background:#ffffff"></div>
<div class="a" style="left:120.3px;top:414.66px;width:114.4px;height:11.7px;background:#ffffff"></div>
<div class="a" style="left:238.2px;top:414.66px;width:30.1px;height:11.7px;background:#ffffff"></div>
<div class="a" style="left:270.8px;top:414.66px;width:71.2px;height:11.7px;background:#ffffff"></div>
<div class="a" style="left:345px;top:414.66px;width:71.7px;height:11.7px;background:#ffffff"></div>
<div class="a" style="left:420px;top:414.66px;width:30.0px;height:11.7px;background:#ffffff"></div>
<div class="a" style="left:453.3px;top:414.66px;width:71.7px;height:11.7px;background:#ffffff"></div>
<div class="a" style="left:528.7px;top:414.66px;width:72.5px;height:11.7px;background:#ffffff"></div>
<div class="a" style="left:604.2px;top:414.66px;width:108.8px;height:11.7px;background:#ffffff"></div>
<div class="a" style="left:5.8px;top:414.66px;width:11.9px;height:11.7px;background:#efefef"></div>
<div class="a" style="left:9px;top:414.66px;line-height:13.3px;color:#000">X</div>
<div class="a" style="left:122.7px;top:414.66px;line-height:13.3px;color:#222">No Balance</div>
<div class="a" style="right:388.6px;top:414.66px;line-height:13.3px;color:#222">0.00</div>
<svg class="a" style="left:106px;top:418.66px" width="6.4" height="4" viewBox="0 0 6.4 4"><path d="M0.7 0.6 L3.2 3.2 L5.7 0.6" fill="none" stroke="#111" stroke-width="1.5"/></svg>
<svg class="a" style="left:227px;top:418.66px" width="6.4" height="4" viewBox="0 0 6.4 4"><path d="M0.7 0.6 L3.2 3.2 L5.7 0.6" fill="none" stroke="#111" stroke-width="1.5"/></svg>
<div class="a" style="right:314.7px;top:414.66px;line-height:13.3px;color:#222">0.00</div>
<div class="a" style="right:205.5px;top:414.66px;line-height:13.3px;color:#222">0.00</div>
<div class="a" style="right:130.5px;top:414.66px;line-height:13.3px;color:#222">0.00</div>
<div class="a" style="left:249.20px;top:415.66px;width:8px;height:8px;background:#fff;border:1px solid #ababab;border-radius:1.8px"></div>
<div class="a" style="left:430.80px;top:415.66px;width:8px;height:8px;background:#fff;border:1px solid #ababab;border-radius:1.8px"></div>
<svg class="a" style="left:613.50px;top:415.56px" width="8.4" height="7.6" viewBox="0 0 8.4 7.6"><rect x="0" y="0" width="8.4" height="7.6" rx="1.3" fill="#666"/><path d="M1.8 3.9 L3.5 5.6 L6.8 1.8" fill="none" stroke="#fff" stroke-width="1.4"/></svg>
<svg class="a" style="left:640.70px;top:415.56px" width="8.4" height="7.6" viewBox="0 0 8.4 7.6"><rect x="0" y="0" width="8.4" height="7.6" rx="1.3" fill="#666"/><path d="M1.8 3.9 L3.5 5.6 L6.8 1.8" fill="none" stroke="#fff" stroke-width="1.4"/></svg>
<svg class="a" style="left:667.60px;top:415.56px" width="8.4" height="7.6" viewBox="0 0 8.4 7.6"><rect x="0" y="0" width="8.4" height="7.6" rx="1.3" fill="#666"/><path d="M1.8 3.9 L3.5 5.6 L6.8 1.8" fill="none" stroke="#fff" stroke-width="1.4"/></svg>
<svg class="a" style="left:694.70px;top:415.56px" width="8.4" height="7.6" viewBox="0 0 8.4 7.6"><rect x="0" y="0" width="8.4" height="7.6" rx="1.3" fill="#666"/><path d="M1.8 3.9 L3.5 5.6 L6.8 1.8" fill="none" stroke="#fff" stroke-width="1.4"/></svg>
<div class="a" style="left:6px;top:426.30px;width:111.4px;height:11.7px;background:#e9f1fa"></div>
<div class="a" style="left:120.3px;top:426.30px;width:114.4px;height:11.7px;background:#e9f1fa"></div>
<div class="a" style="left:238.2px;top:426.30px;width:30.1px;height:11.7px;background:#e9f1fa"></div>
<div class="a" style="left:270.8px;top:426.30px;width:71.2px;height:11.7px;background:#e9f1fa"></div>
<div class="a" style="left:345px;top:426.30px;width:71.7px;height:11.7px;background:#e9f1fa"></div>
<div class="a" style="left:420px;top:426.30px;width:30.0px;height:11.7px;background:#e9f1fa"></div>
<div class="a" style="left:453.3px;top:426.30px;width:71.7px;height:11.7px;background:#e9f1fa"></div>
<div class="a" style="left:528.7px;top:426.30px;width:72.5px;height:11.7px;background:#e9f1fa"></div>
<div class="a" style="left:604.2px;top:426.30px;width:108.8px;height:11.7px;background:#e9f1fa"></div>
<div class="a" style="left:5.8px;top:426.30px;width:11.9px;height:11.7px;background:#efefef"></div>
<div class="a" style="left:9px;top:426.30px;line-height:13.3px;color:#000">X</div>
<div class="a" style="left:122.7px;top:426.30px;line-height:13.3px;color:#222">No Balance</div>
<div class="a" style="right:388.6px;top:426.30px;line-height:13.3px;color:#222">0.00</div>
<svg class="a" style="left:106px;top:430.30px" width="6.4" height="4" viewBox="0 0 6.4 4"><path d="M0.7 0.6 L3.2 3.2 L5.7 0.6" fill="none" stroke="#111" stroke-width="1.5"/></svg>
<svg class="a" style="left:227px;top:430.30px" width="6.4" height="4" viewBox="0 0 6.4 4"><path d="M0.7 0.6 L3.2 3.2 L5.7 0.6" fill="none" stroke="#111" stroke-width="1.5"/></svg>
<div class="a" style="right:314.7px;top:426.30px;line-height:13.3px;color:#222">0.00</div>
<div class="a" style="right:205.5px;top:426.30px;line-height:13.3px;color:#222">0.00</div>
<div class="a" style="right:130.5px;top:426.30px;line-height:13.3px;color:#222">0.00</div>
<div class="a" style="left:249.20px;top:427.30px;width:8px;height:8px;background:#fff;border:1px solid #ababab;border-radius:1.8px"></div>
<div class="a" style="left:430.80px;top:427.30px;width:8px;height:8px;background:#fff;border:1px solid #ababab;border-radius:1.8px"></div>
<svg class="a" style="left:613.50px;top:427.20px" width="8.4" height="7.6" viewBox="0 0 8.4 7.6"><rect x="0" y="0" width="8.4" height="7.6" rx="1.3" fill="#666"/><path d="M1.8 3.9 L3.5 5.6 L6.8 1.8" fill="none" stroke="#fff" stroke-width="1.4"/></svg>
<svg class="a" style="left:640.70px;top:427.20px" width="8.4" height="7.6" viewBox="0 0 8.4 7.6"><rect x="0" y="0" width="8.4" height="7.6" rx="1.3" fill="#666"/><path d="M1.8 3.9 L3.5 5.6 L6.8 1.8" fill="none" stroke="#fff" stroke-width="1.4"/></svg>
<svg class="a" style="left:667.60px;top:427.20px" width="8.4" height="7.6" viewBox="0 0 8.4 7.6"><rect x="0" y="0" width="8.4" height="7.6" rx="1.3" fill="#666"/><path d="M1.8 3.9 L3.5 5.6 L6.8 1.8" fill="none" stroke="#fff" stroke-width="1.4"/></svg>
<svg class="a" style="left:694.70px;top:427.20px" width="8.4" height="7.6" viewBox="0 0 8.4 7.6"><rect x="0" y="0" width="8.4" height="7.6" rx="1.3" fill="#666"/><path d="M1.8 3.9 L3.5 5.6 L6.8 1.8" fill="none" stroke="#fff" stroke-width="1.4"/></svg>
<div class="a" style="left:6px;top:437.94px;width:111.4px;height:11.7px;background:#ffffff"></div>
<div class="a" style="left:120.3px;top:437.94px;width:114.4px;height:11.7px;background:#ffffff"></div>
<div class="a" style="left:238.2px;top:437.94px;width:30.1px;height:11.7px;background:#ffffff"></div>
<div class="a" style="left:270.8px;top:437.94px;width:71.2px;height:11.7px;background:#ffffff"></div>
<div class="a" style="left:345px;top:437.94px;width:71.7px;height:11.7px;background:#ffffff"></div>
<div class="a" style="left:420px;top:437.94px;width:30.0px;height:11.7px;background:#ffffff"></div>
<div class="a" style="left:453.3px;top:437.94px;width:71.7px;height:11.7px;background:#ffffff"></div>
<div class="a" style="left:528.7px;top:437.94px;width:72.5px;height:11.7px;background:#ffffff"></div>
<div class="a" style="left:604.2px;top:437.94px;width:108.8px;height:11.7px;background:#ffffff"></div>
<div class="a" style="left:5.8px;top:437.94px;width:11.9px;height:11.7px;background:#efefef"></div>
<div class="a" style="left:9px;top:437.94px;line-height:13.3px;color:#000">X</div>
<div class="a" style="left:122.7px;top:437.94px;line-height:13.3px;color:#222">No Balance</div>
<div class="a" style="right:388.6px;top:437.94px;line-height:13.3px;color:#222">0.00</div>
<svg class="a" style="left:106px;top:441.94px" width="6.4" height="4" viewBox="0 0 6.4 4"><path d="M0.7 0.6 L3.2 3.2 L5.7 0.6" fill="none" stroke="#111" stroke-width="1.5"/></svg>
<svg class="a" style="left:227px;top:441.94px" width="6.4" height="4" viewBox="0 0 6.4 4"><path d="M0.7 0.6 L3.2 3.2 L5.7 0.6" fill="none" stroke="#111" stroke-width="1.5"/></svg>
<div class="a" style="right:314.7px;top:437.94px;line-height:13.3px;color:#222">0.00</div>
<div class="a" style="right:205.5px;top:437.94px;line-height:13.3px;color:#222">0.00</div>
<div class="a" style="right:130.5px;top:437.94px;line-height:13.3px;color:#222">0.00</div>
<div class="a" style="left:249.20px;top:438.94px;width:8px;height:8px;background:#fff;border:1px solid #ababab;border-radius:1.8px"></div>
<div class="a" style="left:430.80px;top:438.94px;width:8px;height:8px;background:#fff;border:1px solid #ababab;border-radius:1.8px"></div>
<svg class="a" style="left:613.50px;top:438.84px" width="8.4" height="7.6" viewBox="0 0 8.4 7.6"><rect x="0" y="0" width="8.4" height="7.6" rx="1.3" fill="#666"/><path d="M1.8 3.9 L3.5 5.6 L6.8 1.8" fill="none" stroke="#fff" stroke-width="1.4"/></svg>
<svg class="a" style="left:640.70px;top:438.84px" width="8.4" height="7.6" viewBox="0 0 8.4 7.6"><rect x="0" y="0" width="8.4" height="7.6" rx="1.3" fill="#666"/><path d="M1.8 3.9 L3.5 5.6 L6.8 1.8" fill="none" stroke="#fff" stroke-width="1.4"/></svg>
<svg class="a" style="left:667.60px;top:438.84px" width="8.4" height="7.6" viewBox="0 0 8.4 7.6"><rect x="0" y="0" width="8.4" height="7.6" rx="1.3" fill="#666"/><path d="M1.8 3.9 L3.5 5.6 L6.8 1.8" fill="none" stroke="#fff" stroke-width="1.4"/></svg>
<svg class="a" style="left:694.70px;top:438.84px" width="8.4" height="7.6" viewBox="0 0 8.4 7.6"><rect x="0" y="0" width="8.4" height="7.6" rx="1.3" fill="#666"/><path d="M1.8 3.9 L3.5 5.6 L6.8 1.8" fill="none" stroke="#fff" stroke-width="1.4"/></svg>
<div class="a" style="left:68.3px;top:461px;font-weight:bold;color:#222;font-size:8.75px">If the employee has a Pension Tracing Number, please enter it here:</div>
<div class="a" style="left:368.4px;top:456.3px;width:62.2px;height:18.7px;background:#fff;border:1px solid #ccd;border-radius:2px"></div>
<svg class="a" style="left:0;top:0" width="720" height="495" viewBox="0 0 720 495">
<path d="M-60 318 C-55.0 316.7 -40.0 312.6 -30 310 C-20.0 307.4 -9.0 304.3 0 302.3 C9.0 300.3 16.5 299.1 24 297.9 C31.5 296.7 37.3 296.0 45 294.9 C52.7 293.8 60.0 292.6 70 291.5 C80.0 290.4 93.3 289.6 105 288.6 C116.7 287.7 123.3 286.8 140 285.8 C156.7 284.8 188.8 283.4 205 282.6 C221.2 281.9 221.2 281.7 237 281.3 C252.8 280.9 279.5 280.5 300 280.2 C320.5 279.9 341.7 279.6 360 279.7 C378.3 279.8 393.3 280.6 410 281 C426.7 281.4 445.0 281.6 460 282 C475.0 282.4 486.7 282.8 500 283.3 C513.3 283.9 528.3 284.7 540 285.3 C551.7 285.9 560.0 286.4 570 287 C580.0 287.6 588.3 288.1 600 289 C611.7 289.9 629.7 291.4 640 292.5 C650.3 293.6 655.3 294.7 662 295.8 C668.7 296.9 673.7 297.9 680 299.3 C686.3 300.7 695.1 302.7 700 304.2 C704.9 305.7 707.4 307.3 709.5 308.5 C711.6 309.7 712.6 310.3 712.5 311.2 C712.4 312.1 711.1 313.1 709 314 C706.9 314.9 704.8 315.6 700 316.7 C695.2 317.8 690.0 318.8 680 320.8 C670.0 322.8 651.7 326.8 640 328.6 C628.3 330.4 620.0 330.9 610 331.7 C600.0 332.5 588.3 332.9 580 333.5 C571.7 334.1 565.8 334.9 560 335.4 C554.2 335.9 551.7 336.1 545 336.4 C538.3 336.7 527.5 336.9 520 337.3 C512.5 337.7 511.7 338.2 500 338.75 C488.3 339.2 466.7 339.9 450 340.3 C433.3 340.7 426.7 341.2 400 341.2 C373.3 341.1 323.3 340.6 290 340 C256.7 339.4 226.7 338.8 200 337.9 C173.3 337.0 153.3 336.1 130 334.7 C106.7 333.3 77.7 331.3 60 329.3 C42.3 327.3 34.0 324.4 24 322.7 C14.0 321.0 9.0 320.4 0 319.3 C-9.0 318.2 -20.0 316.2 -30 316 C-40.0 315.8 -55.0 317.7 -60 318" fill="none" stroke="#ed1c24" stroke-width="5" stroke-linejoin="round" shape-rendering="crispEdges"/>
<path d="M242.6 212.8 L263.45 212.8 L263.45 234.6 L274.4 235.6 L253.3 257.1 L232.5 235.6 L242.6 234.6 Z" fill="#fff" stroke="#ed1c24" stroke-width="4.6" stroke-linejoin="round"/>
<path d="M163.5 276.5 L182.5 276.5 L182.5 295.5 L191.2 295.5 L172.8 313.4 L155 295.5 L163.5 295.5 Z" fill="#fff" stroke="#ed1c24" stroke-width="4.8" stroke-linejoin="round"/>
</svg>
</body></html>
